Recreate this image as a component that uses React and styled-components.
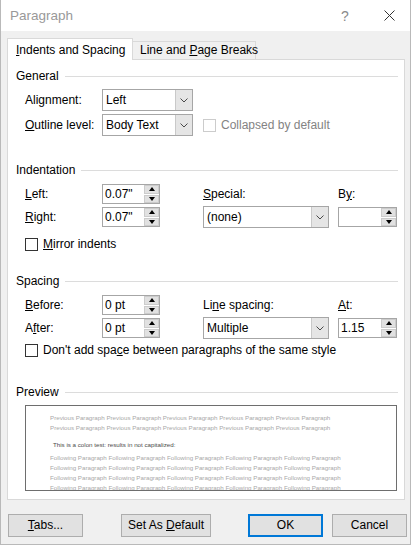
import React from "react";
import styled, { createGlobalStyle } from "styled-components";

const GlobalStyle = createGlobalStyle`
  html, body {
    margin: 0;
    padding: 0;
    background: #ffffff;
  }
  body {
    font-family: "Liberation Sans", Arial, sans-serif;
    font-size: 12px;
    color: #000;
  }
  * {
    box-sizing: border-box;
  }
`;

const Chevron = () => (
  <svg width="8" height="5" viewBox="0 0 8 5">
    <polyline points="0.5,0.5 4,4 7.5,0.5" fill="none" stroke="#4a4a4a" strokeWidth="1" />
  </svg>
);

const Select = ({ value, width }) => (
  <SelectBox $width={width}>
    <SelectValue>{value}</SelectValue>
    <DropButton>
      <Chevron />
    </DropButton>
  </SelectBox>
);

const Spin = ({ value, width }) => (
  <SpinBox $width={width}>
    <SpinValue>{value}</SpinValue>
    <SpinButtons>
      <SpinButton>
        <Arrow $dir="up" />
      </SpinButton>
      <SpinButton>
        <Arrow $dir="down" />
      </SpinButton>
    </SpinButtons>
  </SpinBox>
);

const Check = ({ children, disabled }) => (
  <CheckRow $disabled={disabled}>
    <CheckBox $disabled={disabled} />
    <span>{children}</span>
  </CheckRow>
);

const PREV = "Previous Paragraph Previous Paragraph Previous Paragraph Previous Paragraph Previous Paragraph";
const FOLLOW = "Following Paragraph Following Paragraph Following Paragraph Following Paragraph Following Paragraph";

const App = () => {
  return (
    <>
      <GlobalStyle />
      <Dialog>
        <TitleBar>
          <Title>Paragraph</Title>
          <Help>?</Help>
          <Close>
            <svg width="11" height="11" viewBox="0 0 11 11">
              <line x1="0.5" y1="0.5" x2="10.5" y2="10.5" stroke="#333" strokeWidth="1" />
              <line x1="10.5" y1="0.5" x2="0.5" y2="10.5" stroke="#333" strokeWidth="1" />
            </svg>
          </Close>
        </TitleBar>

        <Body>
          <TabRow>
            <Tab $active>
              <Key>I</Key>ndents and Spacing
            </Tab>
            <Tab>
              Line and <Key>P</Key>age Breaks
            </Tab>
          </TabRow>

          <Panel>
            <Heading>General</Heading>
            <FieldGrid $top={6} $gap={3}>
              <Label>
                Ali<Key>g</Key>nment:
              </Label>
              <Select value="Left" width={91} />
              <span />
              <span />
              <Label>
                <Key>O</Key>utline level:
              </Label>
              <Select value="Body Text" width={91} />
              <Check disabled>Collapsed by default</Check>
              <span />
            </FieldGrid>

            <Heading $top={27}>Indentation</Heading>
            <FieldGrid $top={6} $gap={1}>
              <Label>
                <Key>L</Key>eft:
              </Label>
              <Spin value={'0.07"'} width={58} />
              <Label>
                <Key>S</Key>pecial:
              </Label>
              <Label>
                B<Key>y</Key>:
              </Label>
              <Label>
                <Key>R</Key>ight:
              </Label>
              <Spin value={'0.07"'} width={58} />
              <Select value="(none)" width={126} />
              <Spin value="" width={59} />
            </FieldGrid>
            <Indent $top={9}>
              <Check>
                <Key>M</Key>irror indents
              </Check>
            </Indent>

            <Heading $top={23}>Spacing</Heading>
            <FieldGrid $top={6} $gap={1}>
              <Label>
                <Key>B</Key>efore:
              </Label>
              <Spin value="0 pt" width={58} />
              <Label>
                Li<Key>n</Key>e spacing:
              </Label>
              <Label>
                <Key>A</Key>t:
              </Label>
              <Label>
                A<Key>f</Key>ter:
              </Label>
              <Spin value="0 pt" width={58} />
              <Select value="Multiple" width={126} />
              <Spin value="1.15" width={59} />
            </FieldGrid>
            <Indent $top={4}>
              <Check>
                Don't add spa<Key>c</Key>e between paragraphs of the same style
              </Check>
            </Indent>

            <Heading $top={28}>Preview</Heading>
            <Preview>
              <PreviewLine>{PREV}</PreviewLine>
              <PreviewLine>{PREV}</PreviewLine>
              <SampleLine>This is a colon test: results in not capitalized:</SampleLine>
              <PreviewLine $first>{FOLLOW}</PreviewLine>
              <PreviewLine>{FOLLOW}</PreviewLine>
              <PreviewLine>{FOLLOW}</PreviewLine>
              <PreviewLine>{FOLLOW}</PreviewLine>
            </Preview>
          </Panel>

          <ButtonRow>
            <Button $width={75}>
              <Key>T</Key>abs...
            </Button>
            <Button $width={90} $left={38}>
              Set As <Key>D</Key>efault
            </Button>
            <Button $width={75} $left={37} $primary>
              OK
            </Button>
            <Button $width={75} $left={9}>
              Cancel
            </Button>
          </ButtonRow>
        </Body>
      </Dialog>
    </>
  );
};

export default App;

// Styled-components CSS
const Dialog = styled.div`
  width: 411px;
  height: 545px;
  background: #f0f0f0;
  border-left: 1px solid #b9b9b9;
  border-right: 1px solid #b9b9b9;
  border-bottom: 1px solid #b9b9b9;
  display: flex;
  flex-direction: column;
`;

const TitleBar = styled.div`
  height: 31px;
  background: #ffffff;
  display: flex;
  align-items: center;
  padding-left: 9px;
`;

const Title = styled.div`
  flex: 1;
  font-size: 13.5px;
  color: #999999;
`;

const Help = styled.div`
  width: 10px;
  margin-right: 34px;
  font-size: 14px;
  color: #8a8a8a;
  text-align: center;
`;

const Close = styled.div`
  width: 11px;
  height: 11px;
  margin-right: 15px;
  display: flex;
`;

const Body = styled.div`
  display: flex;
  flex-direction: column;
  padding: 7px 0 0 6px;
`;

const Key = styled.span`
  text-decoration: underline;
`;

const TabRow = styled.div`
  display: flex;
  align-items: flex-end;
  height: 22px;
  margin-bottom: -1px;
  position: relative;
  z-index: 1;
`;

const Tab = styled.div`
  height: ${(p) => (p.$active ? "22px" : "18px")};
  line-height: ${(p) => (p.$active ? "22px" : "17px")};
  margin-bottom: ${(p) => (p.$active ? "0" : "1px")};
  margin-left: ${(p) => (p.$active ? "0" : "-1px")};
  width: ${(p) => (p.$active ? "126px" : "124px")};
  padding-left: ${(p) => (p.$active ? "8px" : "7px")};
  background: ${(p) => (p.$active ? "#ffffff" : "#f0f0f0")};
  border: 1px solid #d9d9d9;
  border-bottom: none;
  white-space: nowrap;
  position: relative;
  z-index: ${(p) => (p.$active ? 2 : 1)};
`;

const Panel = styled.div`
  width: 398px;
  height: 441px;
  background: #ffffff;
  border: 1px solid #d9d9d9;
  padding: 9px 6px 0 8px;
  display: flex;
  flex-direction: column;
`;

const Heading = styled.div`
  display: flex;
  align-items: center;
  height: 14px;
  line-height: 14px;
  margin-top: ${(p) => p.$top || 0}px;
  white-space: nowrap;

  &::after {
    content: "";
    flex: 1;
    height: 1px;
    margin-left: 6px;
    background: #dcdcdc;
  }
`;

const FieldGrid = styled.div`
  display: grid;
  grid-template-columns: 77px 101px 135px 59px;
  grid-auto-rows: 22px;
  row-gap: ${(p) => p.$gap}px;
  margin-top: ${(p) => p.$top}px;
  margin-left: 9px;
  align-items: center;
`;

const Label = styled.div`
  white-space: nowrap;
`;

const Indent = styled.div`
  margin-left: 9px;
  margin-top: ${(p) => p.$top}px;
`;

const SelectBox = styled.div`
  width: ${(p) => p.$width}px;
  height: 22px;
  border: 1px solid #a6a6a6;
  background: #ffffff;
  display: flex;
  align-items: stretch;
`;

const SelectValue = styled.div`
  flex: 1;
  padding-left: 3px;
  display: flex;
  align-items: center;
`;

const DropButton = styled.div`
  width: 17px;
  background: #e5e5e5;
  border-left: 1px solid #c9c9c9;
  display: flex;
  align-items: center;
  justify-content: center;
`;

const SpinBox = styled.div`
  width: ${(p) => p.$width}px;
  height: 20px;
  border: 1px solid #a6a6a6;
  background: #ffffff;
  display: flex;
  align-items: stretch;
`;

const SpinValue = styled.div`
  flex: 1;
  padding-left: 2px;
  display: flex;
  align-items: center;
`;

const SpinButtons = styled.div`
  width: 15px;
  display: flex;
  flex-direction: column;
  gap: 1px;
`;

const SpinButton = styled.div`
  flex: 1;
  background: #e1e1e1;
  border: 1px solid #cccccc;
  display: flex;
  align-items: center;
  justify-content: center;
`;

const Arrow = styled.div`
  width: 0;
  height: 0;
  border-left: 3.5px solid transparent;
  border-right: 3.5px solid transparent;
  ${(p) =>
    p.$dir === "up"
      ? "border-bottom: 4px solid #000;"
      : "border-top: 4px solid #000;"}
`;

const CheckRow = styled.div`
  display: flex;
  align-items: center;
  gap: 5px;
  height: 14px;
  white-space: nowrap;
  color: ${(p) => (p.$disabled ? "#838383" : "#000")};
`;

const CheckBox = styled.div`
  width: 13px;
  height: 13px;
  background: #ffffff;
  border: 1px solid ${(p) => (p.$disabled ? "#cccccc" : "#333333")};
`;

const Preview = styled.div`
  width: 372px;
  height: 86px;
  margin: 6px 0 0 9px;
  border: 1px solid #6e6e6e;
  padding: 7px 0 0 24px;
  overflow: hidden;
  font-size: 6.2px;
`;

const PreviewLine = styled.div`
  height: 10px;
  line-height: 10px;
  white-space: nowrap;
  color: #a9a9a9;
  margin-top: ${(p) => (p.$first ? "3px" : "0")};
`;

const SampleLine = styled.div`
  height: 10px;
  line-height: 10px;
  margin-top: 7px;
  padding-left: 3px;
  white-space: nowrap;
  color: #4a4a4a;
`;

const ButtonRow = styled.div`
  display: flex;
  margin-top: 14px;
  padding-left: 1px;
`;

const Button = styled.div`
  width: ${(p) => p.$width}px;
  height: 23px;
  line-height: ${(p) => (p.$primary ? "19px" : "21px")};
  margin-left: ${(p) => p.$left || 0}px;
  background: #e1e1e1;
  border: ${(p) => (p.$primary ? "2px solid #0078d7" : "1px solid #adadad")};
  text-align: center;
  white-space: nowrap;
`;
